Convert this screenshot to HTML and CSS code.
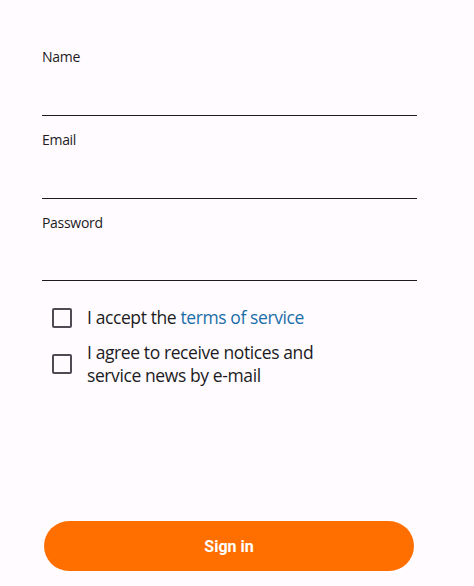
FILE: index.html
```html
<!DOCTYPE html>
<html lang="en">
<head>
<meta charset="utf-8">
<title>Sign in</title>
<link rel="stylesheet" href="styles.css">
</head>
<body>
<form class="form">
  <div class="fields">
    <label class="field">
      <span class="field-label">Name</span>
      <span class="field-input"></span>
    </label>
    <label class="field">
      <span class="field-label">Email</span>
      <span class="field-input"></span>
    </label>
    <label class="field">
      <span class="field-label">Password</span>
      <span class="field-input"></span>
    </label>
  </div>
  <div class="checks">
    <div class="check">
      <span class="box"></span>
      <span class="check-text">I accept the <a class="link">terms of service</a></span>
    </div>
    <div class="check">
      <span class="box"></span>
      <span class="check-text narrow">I agree to receive notices and service news by e-mail</span>
    </div>
  </div>
  <button type="button" class="signin">Sign in</button>
</form>
</body>
</html>
```
FILE: styles.css
```css
html, body {
  margin: 0;
  padding: 0;
  background: #fffbfe;
}
body {
  font-family: "Open Sans", "Noto Sans", sans-serif;
  color: #1c1b1f;
}
.form {
  box-sizing: border-box;
  min-height: 586px;
  display: flex;
  flex-direction: column;
  padding: 47px 57px 15px 42px;
}
.fields {
  display: flex;
  flex-direction: column;
  gap: 14px;
}
.field {
  display: flex;
  flex-direction: column;
}
.field-label {
  font-size: 14px;
  line-height: 19px;
  letter-spacing: -0.3px;
}
.field-input {
  height: 49px;
  border-bottom: 1px solid #1c1b1f;
}
.field:last-child .field-input {
  height: 48px;
}
.checks {
  display: flex;
  flex-direction: column;
  gap: 12px;
  margin-top: 25px;
  padding-left: 10px;
}
.check {
  display: flex;
  align-items: center;
  gap: 15px;
}
.box {
  flex: none;
  box-sizing: border-box;
  width: 20px;
  height: 20px;
  border: 2px solid #4f4b55;
  border-radius: 2px;
}
.check-text {
  font-size: 17.5px;
  line-height: 23px;
  letter-spacing: -0.4px;
}
.narrow {
  max-width: 235px;
}
.link {
  color: #1a6ea8;
  text-decoration: none;
}
.signin {
  margin: auto 3px 0 2px;
  height: 50px;
  border: none;
  border-radius: 25px;
  background: #ff6f00;
  color: #ffffff;
  font-family: Roboto, "Noto Sans", sans-serif;
  font-weight: 700;
  font-size: 16px;
}
```
